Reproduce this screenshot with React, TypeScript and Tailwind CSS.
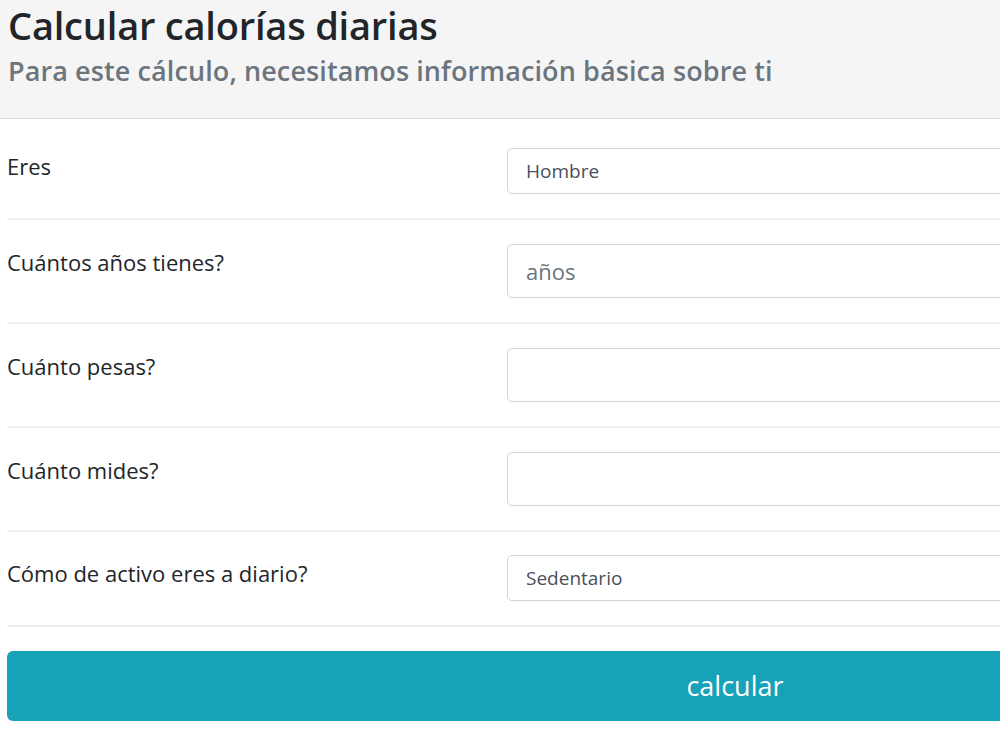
const rows = [
  { label: 'Eres', kind: 'select', value: 'Hombre', h: 'h-[46px]', pad: 'pt-[29px] pb-[24px]' },
  { label: 'Cuántos años tienes?', kind: 'input', placeholder: 'años', h: 'h-[54px]', pad: 'py-[24px]' },
  { label: 'Cuánto pesas?', kind: 'input', placeholder: '', h: 'h-[54px]', pad: 'py-[24px]' },
  { label: 'Cuánto mides?', kind: 'input', placeholder: '', h: 'h-[54px]', pad: 'py-[24px]' },
  { label: 'Cómo de activo eres a diario?', kind: 'select', value: 'Sedentario', h: 'h-[46px]', pad: 'pt-[23px] pb-[24px]' },
];

export default function App() {
  return (
    <div className="h-[750px] w-[1000px] overflow-hidden bg-white font-['Open_Sans',sans-serif] text-[#212529]">
      <header className="h-[119px] w-[1000px] border-b border-[#dcdcdc] bg-[#f5f5f5] px-2">
        <h1 className="pt-[2px] text-[38px] leading-[46px] font-semibold tracking-[-0.2px]">Calcular calorías diarias</h1>
        <h2 className="mt-[6px] text-[27px] leading-[34px] font-semibold tracking-[0.1px] text-[#6c757d]">
          Para este cálculo, necesitamos información básica sobre ti
        </h2>
      </header>

      <form className="w-[1470px] px-[7px]">
        {rows.map((row) => (
          <div key={row.label} className={`${row.pad} flex items-start border-b-2 border-[#eeeeee]`}>
            <label className="w-[500px] shrink-0 pt-[3px] text-[22px] leading-[30px]">{row.label}</label>
            {row.kind === 'select' ? (
              <div className={`${row.h} flex flex-1 items-center rounded-[5px] border border-[#d0d4d9] px-[18px] text-[19px] text-[#495057]`}>
                {row.value}
              </div>
            ) : (
              <div className={`${row.h} flex flex-1 items-center rounded-[5px] border border-[#d0d4d9] px-[18px] text-[22px] text-[#6c757d]`}>
                {row.placeholder}
              </div>
            )}
          </div>
        ))}
        <button
          type="button"
          className="mt-[24px] h-[70px] w-full rounded-[6px] bg-[#17a2b8] text-[27px] text-white"
        >
          calcular
        </button>
      </form>
    </div>
  );
}
